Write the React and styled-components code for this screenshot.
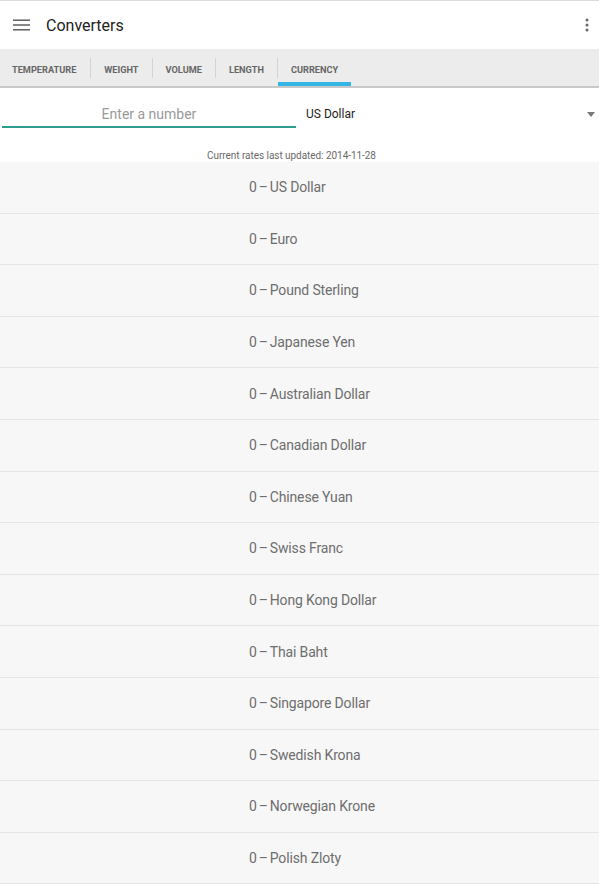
import React from 'react'
import styled, { createGlobalStyle } from 'styled-components'

const GlobalStyle = createGlobalStyle`
  html, body {
    margin: 0;
    padding: 0;
    background: #fff;
    font-family: Roboto, 'Liberation Sans', sans-serif;
  }
`

const Page = styled.div`
  width: 599px;
  height: 885px;
  overflow: hidden;
  display: flex;
  flex-direction: column;
`

const Toolbar = styled.div`
  height: 48px;
  border-top: 1px solid #dcdcdc;
  display: flex;
  align-items: center;
  padding: 0 8px 0 12px;
  flex-shrink: 0;
`

const Title = styled.div`
  flex: 1;
  margin-left: 16px;
  font-size: 16px;
  color: #222;
`

const IconButton = styled.div`
  display: flex;
  align-items: center;
  justify-content: center;
  width: ${props => props.size || 18}px;
  height: 24px;
`

const TabBar = styled.div`
  height: 37px;
  background: #ececec;
  border-bottom: 2px solid #c9c9c9;
  display: flex;
  align-items: stretch;
  flex-shrink: 0;
`

const Tab = styled.div`
  position: relative;
  display: flex;
  align-items: center;
  padding: 3px 13px 0 ${props => props.first ? 12 : 13}px;
  padding-right: ${props => props.first ? 14 : 13}px;
  font-size: 9.2px;
  font-weight: bold;
  color: #666;

  &::after {
    content: ${props => props.active ? "''" : 'none'};
    position: absolute;
    left: 0;
    right: 0;
    bottom: 0;
    height: 4px;
    background: #33b5e5;
  }
`

const Divider = styled.div`
  width: 1px;
  background: #d4d4d4;
  margin: 9px 0 8px;
`

const InputRow = styled.div`
  display: flex;
  align-items: flex-end;
  height: 40px;
  padding: 0 0 0 2px;
  flex-shrink: 0;
`

const NumberInput = styled.div`
  width: 294px;
  height: 28px;
  padding-top: 2px;
  box-sizing: border-box;
  border-bottom: 2px solid #2a9d8f;
  display: flex;
  align-items: center;
  justify-content: center;
  font-size: 14px;
  color: #9a9a9a;
`

const Spinner = styled.div`
  flex: 1;
  height: 30px;
  padding: 2px 4px 0 10px;
  box-sizing: border-box;
  display: flex;
  align-items: center;
  justify-content: space-between;
  font-size: 12px;
  color: #1e1e1e;
`

const Updated = styled.div`
  height: 34px;
  display: flex;
  align-items: flex-end;
  justify-content: center;
  padding: 0 16px 1px 0;
  box-sizing: border-box;
  font-size: 10px;
  letter-spacing: -0.05px;
  color: #6a6a6a;
  flex-shrink: 0;
`

const List = styled.div`
  background: #f7f7f7;
  display: flex;
  flex-direction: column;
`

const Row = styled.div`
  height: 51.6px;
  border-bottom: 1px solid #e4e4e4;
  display: flex;
  align-items: center;
  padding: 0 0 0 249px;
  box-sizing: border-box;
  font-size: 14px;
  letter-spacing: -0.15px;
  color: #6e6e6e;
  flex-shrink: 0;
`

const Dash = styled.span`
  margin: 0 2px;
`

const currencies = [
  'US Dollar',
  'Euro',
  'Pound Sterling',
  'Japanese Yen',
  'Australian Dollar',
  'Canadian Dollar',
  'Chinese Yuan',
  'Swiss Franc',
  'Hong Kong Dollar',
  'Thai Baht',
  'Singapore Dollar',
  'Swedish Krona',
  'Norwegian Krone',
  'Polish Zloty'
]

const tabs = ['TEMPERATURE', 'WEIGHT', 'VOLUME', 'LENGTH', 'CURRENCY']

const App = () => {
  return (
    <Page>
      <GlobalStyle />
      <Toolbar>
        <IconButton size={18}>
          <svg width='17' height='12' viewBox='0 0 17 12'>
            <rect x='0' y='0.5' width='17' height='1.4' fill='#555' />
            <rect x='0' y='5.3' width='17' height='1.4' fill='#555' />
            <rect x='0' y='10.1' width='17' height='1.4' fill='#555' />
          </svg>
        </IconButton>
        <Title>Converters</Title>
        <IconButton size={8}>
          <svg width='4' height='14' viewBox='0 0 4 14'>
            <circle cx='2' cy='2' r='1.5' fill='#666' />
            <circle cx='2' cy='7' r='1.5' fill='#666' />
            <circle cx='2' cy='12' r='1.5' fill='#666' />
          </svg>
        </IconButton>
      </Toolbar>
      <TabBar>
        {tabs.map((t, i) => (
          <React.Fragment key={t}>
            {i > 0 && <Divider />}
            <Tab first={i === 0} active={t === 'CURRENCY'}>{t}</Tab>
          </React.Fragment>
        ))}
      </TabBar>
      <InputRow>
        <NumberInput>Enter a number</NumberInput>
        <Spinner>
          <span>US Dollar</span>
          <svg width='8' height='5' viewBox='0 0 8 5'>
            <polygon points='0,0 8,0 4,5' fill='#777' />
          </svg>
        </Spinner>
      </InputRow>
      <Updated>Current rates last updated: 2014-11-28</Updated>
      <List>
        {currencies.map(c => (
          <Row key={c}>0<Dash>–</Dash>{c}</Row>
        ))}
      </List>
    </Page>
  )
}

export default App
